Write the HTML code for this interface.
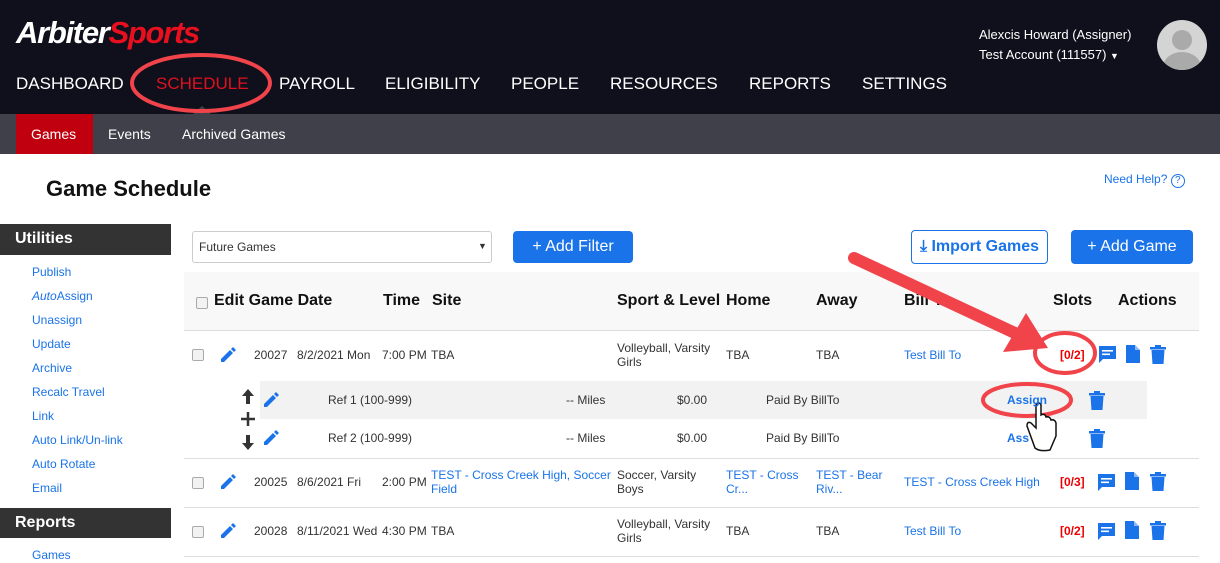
<!DOCTYPE html>
<html><head><meta charset="utf-8"><style>
*{margin:0;padding:0;box-sizing:border-box}
body{width:1220px;height:563px;overflow:hidden;background:#fff;font-family:"Liberation Sans",Arial,sans-serif;position:relative;color:#222}
.t{position:absolute;white-space:nowrap}
.nav{color:#fff;font-size:17px;top:74px}
.sl{color:#1a73e8;font-size:12px;left:32px}
.h{font-weight:bold;font-size:16px;top:292px;color:#111}
.c{font-size:12px;color:#333}
.lk{font-size:12px;color:#1a73e8}
.cb{position:absolute;width:12px;height:12px;border:1px solid #aaa;border-radius:2px;background:#f2f2f2}
.red{color:#e00;font-size:12px;font-weight:bold}
</style></head><body>
<div style="position:absolute;left:0;top:0;width:1220px;height:114px;background:#10101c"></div>
<div style="position:absolute;left:0;top:114px;width:1220px;height:40px;background:#3f4049"></div>
<div style="position:absolute;left:16px;top:114px;width:77px;height:40px;background:#c0000f"></div>
<div class="t" style="left:16px;top:15px;font-size:31px;font-weight:bold;font-style:italic;letter-spacing:-1.3px;color:#fff">Arbiter<span style="color:#e8101f">Sports</span></div>
<div class="t nav" style="left:16px">DASHBOARD</div>
<div class="t nav" style="left:156px;color:#e0101f">SCHEDULE</div>
<div class="t nav" style="left:279px">PAYROLL</div>
<div class="t nav" style="left:385px">ELIGIBILITY</div>
<div class="t nav" style="left:511px">PEOPLE</div>
<div class="t nav" style="left:610px">RESOURCES</div>
<div class="t nav" style="left:749px">REPORTS</div>
<div class="t nav" style="left:862px">SETTINGS</div>
<div style="position:absolute;left:193px;top:106px;width:0;height:0;border-left:9px solid transparent;border-right:9px solid transparent;border-bottom:8px solid #3f4049"></div>
<div class="t" style="left:31px;top:126px;color:#fff;font-size:14px">Games</div>
<div class="t" style="left:108px;top:126px;color:#fff;font-size:14px">Events</div>
<div class="t" style="left:182px;top:126px;color:#fff;font-size:14px">Archived Games</div>
<div class="t" style="left:979px;top:27px;color:#fff;font-size:13px">Alexcis Howard (Assigner)</div>
<div class="t" style="left:979px;top:47px;color:#fff;font-size:13px">Test Account (111557) <span style="font-size:9px">▼</span></div>
<div style="position:absolute;left:1157px;top:20px;width:50px;height:50px;border-radius:50%;background:#d4d4d4;overflow:hidden">
<div style="position:absolute;left:15px;top:10px;width:20px;height:20px;border-radius:50%;background:#aaa"></div>
<div style="position:absolute;left:6px;top:32px;width:38px;height:30px;border-radius:50% 50% 0 0;background:#aaa"></div></div>
<div class="t" style="left:46px;top:176px;font-size:22px;font-weight:bold;color:#111">Game Schedule</div>
<div class="t" style="left:1104px;top:172px;font-size:12px;color:#1a73e8">Need Help? <span style="display:inline-block;width:14px;height:14px;border:1.5px solid #1a73e8;border-radius:50%;text-align:center;font-size:10px;line-height:11px">?</span></div>
<div style="position:absolute;left:0;top:224px;width:171px;height:31px;background:#333"></div>
<div class="t" style="left:15px;top:230px;color:#fff;font-size:16px;font-weight:bold">Utilities</div>
<div class="t sl" style="top:265px">Publish</div>
<div class="t sl" style="top:289px"><i>Auto</i>Assign</div>
<div class="t sl" style="top:313px">Unassign</div>
<div class="t sl" style="top:337px">Update</div>
<div class="t sl" style="top:361px">Archive</div>
<div class="t sl" style="top:385px">Recalc Travel</div>
<div class="t sl" style="top:409px">Link</div>
<div class="t sl" style="top:433px">Auto Link/Un-link</div>
<div class="t sl" style="top:457px">Auto Rotate</div>
<div class="t sl" style="top:481px">Email</div>
<div style="position:absolute;left:0;top:508px;width:171px;height:30px;background:#333"></div>
<div class="t" style="left:15px;top:514px;color:#fff;font-size:16px;font-weight:bold">Reports</div>
<div class="t sl" style="top:548px">Games</div>
<div style="position:absolute;left:192px;top:231px;width:300px;height:32px;border:1px solid #ccc;border-radius:3px"></div>
<div class="t" style="left:199px;top:240px;font-size:12px;color:#333">Future Games</div>
<div class="t" style="left:478px;top:241px;font-size:9px;color:#333">▼</div>
<div style="position:absolute;left:513px;top:231px;width:120px;height:32px;background:#1a73e8;border-radius:4px;color:#fff;font-size:16px;text-align:center;line-height:32px">+ Add Filter</div>
<div style="position:absolute;left:911px;top:230px;width:137px;height:34px;border:1px solid #1a73e8;border-radius:4px;color:#1a73e8;font-size:16px;font-weight:bold;text-align:center;line-height:32px">⤓ Import Games</div>
<div style="position:absolute;left:1071px;top:230px;width:122px;height:34px;background:#1a73e8;border-radius:4px;color:#fff;font-size:16px;text-align:center;line-height:34px">+ Add Game</div>
<div style="position:absolute;left:184px;top:272px;width:1015px;height:59px;background:#f8f8f8;border-bottom:1px solid #ddd"></div>
<div class="cb" style="left:196px;top:297px"></div>
<div class="t h" style="left:214px">Edit Game Date</div>
<div class="t h" style="left:383px">Time</div>
<div class="t h" style="left:432px">Site</div>
<div class="t h" style="left:617px">Sport &amp; Level</div>
<div class="t h" style="left:726px">Home</div>
<div class="t h" style="left:816px">Away</div>
<div class="t h" style="left:904px">Bill To</div>
<div class="t h" style="left:1053px">Slots</div>
<div class="t h" style="left:1118px">Actions</div>
<div style="position:absolute;left:260px;top:381px;width:887px;height:38px;background:#f2f2f2"></div>
<div style="position:absolute;left:184px;top:458px;width:1015px;height:1px;background:#ddd"></div>
<div style="position:absolute;left:184px;top:507px;width:1015px;height:1px;background:#ddd"></div>
<div style="position:absolute;left:184px;top:556px;width:1015px;height:1px;background:#ddd"></div>
<svg width="1220" height="563" style="position:absolute;left:0;top:0">
<defs><g id="pen"><path d="M0 12 L0 15 L3 15 L12 6 L9 3 Z M10 2 L12 0 L15 3 L13 5 Z" fill="#1a73e8"/></g>
<g id="trash"><rect x="0" y="2" width="16" height="2.5" fill="#1a73e8"/><rect x="5" y="0" width="6" height="3" fill="#1a73e8"/><path d="M1.5 5 H14.5 L13.5 19 H2.5 Z" fill="#1a73e8"/></g>
<g id="doc"><path d="M0 0 H9 L14 5 V18 H0 Z" fill="#1a73e8"/><path d="M9 0 V5 H14" fill="#fff" opacity=".5"/></g>
<g id="msg"><path d="M0 0 H17 V13 H4 L0 17 Z" fill="#1a73e8"/><rect x="3" y="4" width="11" height="1.6" fill="#fff"/><rect x="3" y="7.5" width="8" height="1.6" fill="#fff"/></g></defs>
<use href="#pen" x="221" y="347"/><use href="#pen" x="264" y="392"/><use href="#pen" x="264" y="430"/><use href="#pen" x="221" y="474"/><use href="#pen" x="221" y="523"/>
<use href="#msg" x="1099" y="346"/><use href="#doc" x="1126" y="345"/><use href="#trash" x="1150" y="345"/>
<use href="#trash" x="1089" y="391"/><use href="#trash" x="1089" y="429"/>
<use href="#msg" x="1098" y="474"/><use href="#doc" x="1125" y="472"/><use href="#trash" x="1150" y="472"/>
<use href="#msg" x="1098" y="523"/><use href="#doc" x="1125" y="521"/><use href="#trash" x="1150" y="521"/>
<path d="M248 389 L242 396 H246 V404 H250 V396 H254 Z" fill="#333"/>
<path d="M241 419 H255 M248 412 V426" stroke="#333" stroke-width="2.5"/>
<path d="M248 450 L242 443 H246 V435 H250 V443 H254 Z" fill="#333"/>
<ellipse cx="201" cy="83" rx="69" ry="28" fill="none" stroke="#f0434a" stroke-width="4"/>
<line x1="854" y1="258" x2="1015" y2="333" stroke="#f0434a" stroke-width="12" stroke-linecap="round"/>
<path d="M1048 348 L1003 352 L1026 313 Z" fill="#f0434a"/>
<ellipse cx="1065" cy="353" rx="30" ry="20" fill="none" stroke="#f0434a" stroke-width="4"/>
<ellipse cx="1027" cy="400" rx="44" ry="16" fill="none" stroke="#f0434a" stroke-width="4"/>
<path d="M1036 405 V428 L1031 423 Q1027 421 1027 426 L1035 448 Q1040 452 1050 450 L1056 436 V423 Q1055 419 1051 420 Q1050 416 1046 417 Q1045 413 1041 415 V405 Q1039 401 1036 405 Z" fill="#fff" stroke="#111" stroke-width="1.5"/>
</svg>
<div class="cb" style="left:192px;top:349px"></div>
<div class="t c" style="left:254px;top:348px">20027</div><div class="t c" style="left:297px;top:348px">8/2/2021 Mon</div><div class="t c" style="left:382px;top:348px">7:00 PM</div><div class="t c" style="left:431px;top:348px">TBA</div>
<div class="t c" style="left:617px;top:341px;line-height:14px">Volleyball, Varsity<br>Girls</div>
<div class="t c" style="left:726px;top:348px">TBA</div><div class="t c" style="left:816px;top:348px">TBA</div>
<div class="t lk" style="left:904px;top:348px">Test Bill To</div>
<div class="t red" style="left:1060px;top:348px">[0/2]</div>
<div class="t c" style="left:328px;top:393px">Ref 1 (100-999)</div><div class="t c" style="left:566px;top:393px">-- Miles</div><div class="t c" style="left:677px;top:393px">$0.00</div><div class="t c" style="left:766px;top:393px">Paid By BillTo</div>
<div class="t lk" style="left:1007px;top:393px;font-weight:bold">Assign</div>
<div class="t c" style="left:328px;top:431px">Ref 2 (100-999)</div><div class="t c" style="left:566px;top:431px">-- Miles</div><div class="t c" style="left:677px;top:431px">$0.00</div><div class="t c" style="left:766px;top:431px">Paid By BillTo</div>
<div class="t lk" style="left:1007px;top:431px;font-weight:bold">Ass</div>
<div class="cb" style="left:192px;top:477px"></div>
<div class="t c" style="left:254px;top:475px">20025</div><div class="t c" style="left:297px;top:475px">8/6/2021 Fri</div><div class="t c" style="left:382px;top:475px">2:00 PM</div>
<div class="t lk" style="left:431px;top:468px;line-height:14px">TEST - Cross Creek High, Soccer<br>Field</div>
<div class="t c" style="left:617px;top:468px;line-height:14px">Soccer, Varsity<br>Boys</div>
<div class="t lk" style="left:726px;top:468px;line-height:14px">TEST - Cross<br>Cr...</div>
<div class="t lk" style="left:816px;top:468px;line-height:14px">TEST - Bear<br>Riv...</div>
<div class="t lk" style="left:904px;top:475px">TEST - Cross Creek High</div>
<div class="t red" style="left:1060px;top:475px">[0/3]</div>
<div class="cb" style="left:192px;top:526px"></div>
<div class="t c" style="left:254px;top:524px">20028</div><div class="t c" style="left:297px;top:524px">8/11/2021 Wed</div><div class="t c" style="left:382px;top:524px">4:30 PM</div><div class="t c" style="left:431px;top:524px">TBA</div>
<div class="t c" style="left:617px;top:517px;line-height:14px">Volleyball, Varsity<br>Girls</div>
<div class="t c" style="left:726px;top:524px">TBA</div><div class="t c" style="left:816px;top:524px">TBA</div>
<div class="t lk" style="left:904px;top:524px">Test Bill To</div>
<div class="t red" style="left:1060px;top:524px">[0/2]</div>
</body></html>
